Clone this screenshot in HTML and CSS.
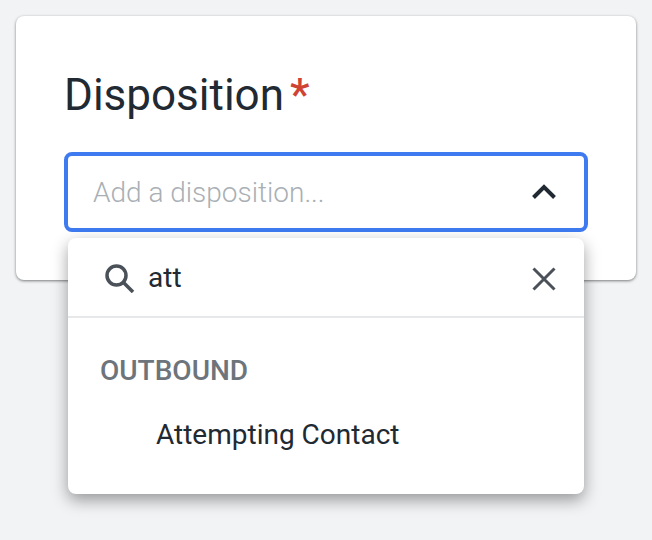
FILE: index.html
```html
<!DOCTYPE html>
<html lang="en">

<head>
  <meta charset="UTF-8" />
  <meta name="viewport" content="width=device-width, initial-scale=1.0" />
  <title>Disposition</title>
  <link rel="stylesheet" href="styles.css">
</head>

<body>
  <div class="card">
    <div class="label">Disposition<span class="required">*</span></div>

    <div class="select">
      <div class="select-box">
        <span class="placeholder">Add a disposition...</span>
        <svg class="chevron" width="28" height="28" viewBox="0 0 28 28">
          <path d="M3.5 19.5 L14 9 L24.5 19.5" />
        </svg>
      </div>

      <div class="dropdown">
        <div class="search">
          <svg class="search-icon" width="32" height="32" viewBox="0 0 32 32">
            <circle cx="12.5" cy="14.5" r="9.5" />
            <path d="M19.5 21.5 L29 31" />
          </svg>
          <span class="query">att</span>
          <svg class="clear" width="26" height="26" viewBox="0 0 26 26">
            <path d="M2.5 2.5 L23.5 23.5 M23.5 2.5 L2.5 23.5" />
          </svg>
        </div>
        <div class="results">
          <div class="group">OUTBOUND</div>
          <div class="option">Attempting Contact</div>
        </div>
      </div>
    </div>
  </div>
</body>

</html>
```

FILE: styles.css
```css
* {
  box-sizing: border-box;
}

body {
  margin: 0;
  padding: 16px;
  height: 540px;
  overflow: hidden;
  background: #f1f3f5;
  font-family: Roboto, sans-serif;
  color: #212932;
}

.card {
  width: 620px;
  height: 264px;
  padding: 48px;
  background: #fff;
  border-radius: 8px;
  box-shadow: 0 1px 3px rgba(0, 0, 0, 0.5);
}

.label {
  font-size: 44px;
  line-height: 62px;
  margin-bottom: 26px;
}

.required {
  color: #cf4332;
  margin-left: 6px;
  font-weight: 500;
}

.select {
  position: relative;
}

.select-box {
  display: flex;
  align-items: center;
  justify-content: space-between;
  height: 80px;
  padding: 0 26px 0 25px;
  border: 4px solid #3e7bf1;
  border-radius: 8px;
  background: #fff;
}

.placeholder {
  font-size: 28px;
  font-weight: 300;
  color: #a9afb5;
}

.chevron path {
  fill: none;
  stroke: #212932;
  stroke-width: 4;
}

.dropdown {
  position: absolute;
  top: 86px;
  left: 4px;
  width: 516px;
  height: 256px;
  background: #fff;
  border-radius: 8px;
  box-shadow: 0 6px 16px rgba(0, 0, 0, 0.38);
}

.search {
  display: flex;
  align-items: center;
  height: 80px;
  padding: 0 27px 0 36px;
  border-bottom: 2px solid #e6e8ea;
}

.search-icon circle,
.search-icon path {
  fill: none;
  stroke: #4a5158;
  stroke-width: 3.5;
}

.query {
  flex: 1;
  margin-left: 12px;
  font-size: 28px;
}

.clear {
  margin-top: 4px;
}

.clear path {
  fill: none;
  stroke: #4a5158;
  stroke-width: 3;
}

.results {
  padding: 33px 32px 0;
}

.group {
  font-size: 28px;
  line-height: 40px;
  font-weight: 500;
  color: #6d747b;
}

.option {
  margin-top: 24px;
  padding-left: 56px;
  font-size: 28px;
  line-height: 40px;
}
```
